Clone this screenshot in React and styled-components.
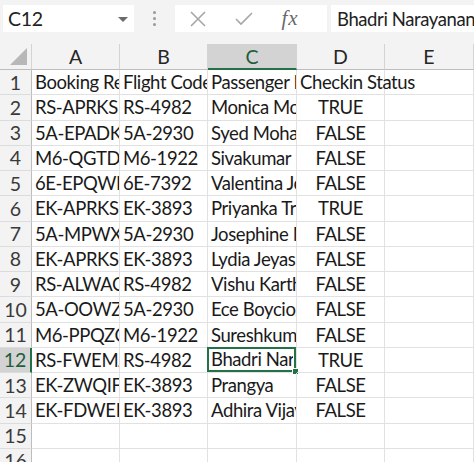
import React from "react";
import styled, { createGlobalStyle, css } from "styled-components";

const GREEN = "#217346";

const rows = [
  ["Booking Reference", "Flight Code", "Passenger Name", "Checkin Status"],
  ["RS-APRKSNMQ", "RS-4982", "Monica Mohan", "TRUE"],
  ["5A-EPADKVWZ", "5A-2930", "Syed Mohammed", "FALSE"],
  ["M6-QGTDKWLS", "M6-1922", "Sivakumar", "FALSE"],
  ["6E-EPQWKRTY", "6E-7392", "Valentina Jose", "FALSE"],
  ["EK-APRKSNMQ", "EK-3893", "Priyanka Tripathi", "TRUE"],
  ["5A-MPWXJZKL", "5A-2930", "Josephine Mary", "FALSE"],
  ["EK-APRKSNQW", "EK-3893", "Lydia Jeyasingh", "FALSE"],
  ["RS-ALWACXZD", "RS-4982", "Vishu Karthik", "FALSE"],
  ["5A-OOWZCVBN", "5A-2930", "Ece Boycioglu", "FALSE"],
  ["M6-PPQZCXMN", "M6-1922", "Sureshkumar", "FALSE"],
  ["RS-FWEMJTYU", "RS-4982", "Bhadri Narayanan", "TRUE"],
  ["EK-ZWQIFGHJ", "EK-3893", "Prangya", "FALSE"],
  ["EK-FDWEFASD", "EK-3893", "Adhira Vijay", "FALSE"],
  ["", "", "", ""],
  ["", "", "", ""],
];

const columns = ["A", "B", "C", "D", "E"];
const activeCol = 2;
const activeRow = 12;

const GlobalStyle = createGlobalStyle`
  html, body {
    margin: 0;
    padding: 0;
    background: #ffffff;
    overflow: hidden;
  }
  body {
    font-family: Lato, "Open Sans", sans-serif;
  }
`;

const Window = styled.div`
  width: 474px;
  height: 462px;
  overflow: hidden;
  background: #ffffff;
`;

const FormulaBar = styled.div`
  display: flex;
  align-items: center;
  height: 44px;
  padding: 0 0 7px 3px;
  box-sizing: border-box;
  background: #f3f3f3;
`;

const NameBox = styled.div`
  display: flex;
  align-items: center;
  justify-content: space-between;
  width: 131px;
  height: 27px;
  padding: 0 6px 0 5px;
  box-sizing: border-box;
  background: #ffffff;
  font-size: 19.5px;
  letter-spacing: -0.3px;
  color: #222;
`;

const Caret = styled.span`
  width: 0;
  height: 0;
  border-left: 5px solid transparent;
  border-right: 5px solid transparent;
  border-top: 5px solid #6b6b6b;
  margin-top: 2px;
`;

const Grip = styled.div`
  display: flex;
  flex-direction: column;
  gap: 3px;
  width: 41px;
  align-items: center;
  span {
    width: 3px;
    height: 3px;
    border-radius: 50%;
    background: #9a9a9a;
  }
`;

const ButtonBox = styled.div`
  display: flex;
  align-items: center;
  width: 152px;
  height: 27px;
  background: #ffffff;
`;

const BarButton = styled.div`
  display: flex;
  align-items: center;
  justify-content: center;
  width: ${(p) => p.$w}px;
  height: 100%;
  color: #a8a8a8;
`;

const Fx = styled.span`
  font-family: "Liberation Serif", serif;
  font-style: italic;
  font-size: 21px;
  color: #6a6a6a;
  letter-spacing: 1px;
`;

const FormulaInput = styled.div`
  flex: 1;
  height: 27px;
  margin-left: 4px;
  padding-left: 6px;
  display: flex;
  align-items: center;
  background: #ffffff;
  font-size: 18.5px;
  letter-spacing: -0.4px;
  color: #222;
  white-space: nowrap;
  overflow: hidden;
`;

const Sheet = styled.div`
  display: grid;
  grid-template-columns: 32px 88px 88px 89px 88px 89px;
  grid-template-rows: 26px;
  grid-auto-rows: 25.25px;
  font-size: 18.5px;
  letter-spacing: -0.4px;
  color: #1a1a1a;
`;

const Corner = styled.div`
  position: relative;
  background: #f3f3f3;
  border-right: 1px solid #d4d4d4;
  border-bottom: 1px solid #bdbdbd;
  box-sizing: border-box;
  &::after {
    content: "";
    position: absolute;
    right: 4px;
    bottom: 4px;
    width: 0;
    height: 0;
    border-left: 17px solid transparent;
    border-bottom: 17px solid #b8b8b8;
  }
`;

const ColHead = styled.div`
  display: flex;
  align-items: center;
  justify-content: center;
  box-sizing: border-box;
  background: ${(p) => (p.$active ? "#d3d3d3" : "#f3f3f3")};
  border-right: 1px solid #d4d4d4;
  border-bottom: ${(p) => (p.$active ? `2px solid ${GREEN}` : "1px solid #bdbdbd")};
  color: ${(p) => (p.$active ? "#1e5e3a" : "#262626")};
  font-size: 19.5px;
  letter-spacing: 0;
`;

const RowHead = styled.div`
  display: flex;
  align-items: center;
  justify-content: center;
  box-sizing: border-box;
  background: ${(p) => (p.$active ? "#d3d3d3" : "#f3f3f3")};
  border-bottom: 1px solid #dcdcdc;
  border-right: ${(p) => (p.$active ? `2px solid ${GREEN}` : "1px solid #bdbdbd")};
  color: ${(p) => (p.$active ? "#1e5e3a" : "#3a3a3a")};
  font-size: 19.5px;
  letter-spacing: 0;
`;

const Cell = styled.div`
  position: relative;
  display: flex;
  align-items: center;
  padding: 0 3px;
  box-sizing: border-box;
  border-right: 1px solid #e1e1e1;
  border-bottom: 1px solid #e1e1e1;
  white-space: nowrap;
  overflow: ${(p) => (p.$spill ? "visible" : "hidden")};
  justify-content: ${(p) => (p.$center ? "center" : "flex-start")};
  ${(p) =>
    p.$selected &&
    css`
      overflow: visible;
      box-shadow: inset 0 0 0 2px ${GREEN};
      margin: -1px 0 0 -1px;
      padding-left: 4px;
      &::after {
        content: "";
        position: absolute;
        right: -3px;
        bottom: -3px;
        width: 5px;
        height: 5px;
        background: ${GREEN};
        border: 1px solid #ffffff;
      }
    `}
`;

const Clip = styled.span`
  overflow: hidden;
  display: block;
  max-width: 100%;
`;

const CrossIcon = () => (
  <svg width="18" height="18" viewBox="0 0 18 18">
    <path d="M2 2 L16 16 M16 2 L2 16" stroke="#a6a6a6" strokeWidth="1.6" />
  </svg>
);

const CheckIcon = () => (
  <svg width="18" height="14" viewBox="0 0 18 14">
    <path d="M1 7 L6 12 L17 1" stroke="#a6a6a6" strokeWidth="1.6" fill="none" />
  </svg>
);

export default function App() {
  return (
    <Window>
      <GlobalStyle />
      <FormulaBar>
        <NameBox>
          C12
          <Caret />
        </NameBox>
        <Grip>
          <span />
          <span />
          <span />
        </Grip>
        <ButtonBox>
          <BarButton $w={46}>
            <CrossIcon />
          </BarButton>
          <BarButton $w={46}>
            <CheckIcon />
          </BarButton>
          <BarButton $w={46}>
            <Fx>fx</Fx>
          </BarButton>
        </ButtonBox>
        <FormulaInput>Bhadri Narayanan</FormulaInput>
      </FormulaBar>
      <Sheet>
        <Corner />
        {columns.map((c, i) => (
          <ColHead key={c} $active={i === activeCol}>
            {c}
          </ColHead>
        ))}
        {rows.map((r, ri) => {
          const n = ri + 1;
          return (
            <React.Fragment key={n}>
              <RowHead $active={n === activeRow}>{n}</RowHead>
              {r.map((v, ci) => {
                const selected = n === activeRow && ci === activeCol;
                const spill = n === 1 && ci === 3;
                return (
                  <Cell
                    key={ci}
                    $center={ci === 3 && n > 1}
                    $spill={spill}
                    $selected={selected}
                  >
                    {selected ? <Clip>{v}</Clip> : v}
                  </Cell>
                );
              })}
              <Cell />
            </React.Fragment>
          );
        })}
      </Sheet>
    </Window>
  );
}
